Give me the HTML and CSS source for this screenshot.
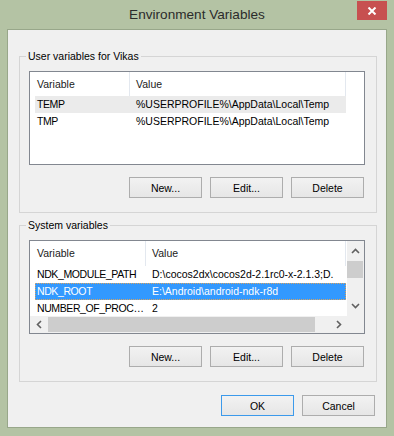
FILE: index.html
```html
<!DOCTYPE html>
<html lang="en">
<head>
    <meta charset="UTF-8">
    <meta name="viewport" content="width=device-width, initial-scale=1.0">
    <title>Environment Variables</title>
    <link rel="stylesheet" href="styles.css">
</head>
<body>

    <div class="window">
        <!-- Title bar -->
        <div class="titlebar">
            <span class="title">Environment Variables</span>
            <span class="close">
                <svg width="10" height="8" viewBox="0 0 10 8">
                    <path d="M1.5 0.5 L8.5 7.5 M8.5 0.5 L1.5 7.5" stroke="#fff" stroke-width="2" fill="none"/>
                </svg>
            </span>
        </div>

        <div class="client">
            <!-- User variables -->
            <fieldset class="group">
                <legend>User variables for Vikas</legend>
                <div class="list user-list">
                    <div class="list-view">
                        <div class="list-head">
                            <span class="col col-name">Variable</span>
                            <span class="col col-value">Value</span>
                            <span class="col col-fill"></span>
                        </div>
                        <div class="list-row inactive">
                            <span class="cell cell-name">TEMP</span>
                            <span class="cell cell-value">%USERPROFILE%\AppData\Local\Temp</span>
                        </div>
                        <div class="list-row">
                            <span class="cell cell-name">TMP</span>
                            <span class="cell cell-value">%USERPROFILE%\AppData\Local\Temp</span>
                        </div>
                    </div>
                </div>
                <div class="buttons">
                    <button class="btn">New...</button>
                    <button class="btn">Edit...</button>
                    <button class="btn">Delete</button>
                </div>
            </fieldset>

            <!-- System variables -->
            <fieldset class="group group-system">
                <legend>System variables</legend>
                <div class="list system-list">
                    <div class="list-view">
                        <div class="list-head">
                            <span class="col col-name">Variable</span>
                            <span class="col col-value">Value</span>
                        </div>
                        <div class="list-row">
                            <span class="cell cell-name">NDK_MODULE_PATH</span>
                            <span class="cell cell-value">D:\cocos2dx\cocos2d-2.1rc0-x-2.1.3;D.</span>
                        </div>
                        <div class="list-row selected">
                            <span class="cell cell-name">NDK_ROOT</span>
                            <span class="cell cell-value">E:\Android\android-ndk-r8d</span>
                        </div>
                        <div class="list-row">
                            <span class="cell cell-name">NUMBER_OF_PROC…</span>
                            <span class="cell cell-value">2</span>
                        </div>
                    </div>

                    <div class="vscroll">
                        <span class="arrow">
                            <svg width="9" height="6" viewBox="0 0 9 6"><path d="M1 5 L4.5 1.5 L8 5" stroke="#606060" stroke-width="1.6" fill="none"/></svg>
                        </span>
                        <span class="thumb"></span>
                        <span class="track"></span>
                        <span class="arrow">
                            <svg width="9" height="6" viewBox="0 0 9 6"><path d="M1 1 L4.5 4.5 L8 1" stroke="#606060" stroke-width="1.6" fill="none"/></svg>
                        </span>
                    </div>

                    <div class="hscroll">
                        <span class="arrow">
                            <svg width="6" height="9" viewBox="0 0 6 9"><path d="M5 1 L1.5 4.5 L5 8" stroke="#606060" stroke-width="1.6" fill="none"/></svg>
                        </span>
                        <span class="thumb"></span>
                        <span class="track"></span>
                        <span class="arrow">
                            <svg width="6" height="9" viewBox="0 0 6 9"><path d="M1 1 L4.5 4.5 L1 8" stroke="#606060" stroke-width="1.6" fill="none"/></svg>
                        </span>
                    </div>

                    <div class="corner"></div>
                </div>
                <div class="buttons">
                    <button class="btn">New...</button>
                    <button class="btn">Edit...</button>
                    <button class="btn">Delete</button>
                </div>
            </fieldset>

            <div class="dialog-buttons">
                <button class="btn btn-default">OK</button>
                <button class="btn">Cancel</button>
            </div>
        </div>
    </div>

</body>
</html>
```

FILE: styles.css
```css
/* General Reset */
* {
    margin: 0;
    padding: 0;
    box-sizing: border-box;
    font-family: 'Liberation Sans', Arial, sans-serif;
}

body {
    background: #b4c3a4;
    color: #000;
    font-size: 10.5px;
}

/* Window frame */
.window {
    width: 394px;
    height: 436px;
    background: #b4c3a4;
    display: flex;
    flex-direction: column;
}

.titlebar {
    height: 29px;
    display: grid;
    grid-template-columns: 1fr auto 1fr;
}

.title {
    grid-column: 2;
    align-self: center;
    font-size: 13.6px;
    color: #2b2b2b;
    line-height: 20px;
    padding-top: 1px;
}

.close {
    grid-column: 3;
    justify-self: end;
    align-self: start;
    width: 30px;
    height: 19px;
    margin-top: 1px;
    margin-right: 7px;
    background: #c75050;
    display: flex;
    justify-content: center;
    align-items: center;
}

.client {
    flex: 1;
    margin: 0 7px 8px 7px;
    border: 1px solid #98a78a;
    background: #f0f0f0;
    padding: 19px 0 11px 0;
    display: flex;
    flex-direction: column;
}

/* Group boxes */
.group {
    border: 1px solid #d5d5d5;
    margin: 0 9px 0 11px;
    padding: 7px 11px 14px 9px;
    min-width: 0;
}

.group-system {
    margin-top: 5px;
}

.group legend {
    line-height: 15px;
    padding: 0 2px;
    margin-left: -3px;
    color: #000;
}

/* List views */
.list {
    height: 94px;
    background: #fff;
    border: 1px solid #828790;
    overflow: hidden;
}

.user-list {
    --name-w: 100px;
    --value-w: 216px;
}

.system-list {
    --name-w: 116px;
    --value-w: 200px;
    display: grid;
    grid-template-columns: 1fr 17px;
    grid-template-rows: 1fr 17px;
}

.list-view {
    overflow: hidden;
    min-width: 0;
}

.list-head {
    height: 24px;
    display: flex;
}

.system-list .list-head {
    height: 25px;
}

.col {
    line-height: 24px;
    white-space: nowrap;
    border-right: 1px solid #e3e8ef;
    color: #1a1a1a;
}

.col-name {
    width: var(--name-w);
    padding-left: 7px;
}

.col-value {
    width: var(--value-w);
    padding-left: 6px;
}

.col-fill {
    flex: 1;
    border-right: none;
}

.list-row {
    height: 17px;
    margin-left: 5px;
    width: calc(var(--name-w) + var(--value-w) - 5px);
    display: grid;
    grid-template-columns: calc(var(--name-w) - 5px) var(--value-w);
    line-height: 17px;
}

.list-row.inactive {
    background: #ebebeb;
}

.list-row.selected {
    background: #3399ff;
    color: #fff;
    outline: 1px dotted #d9a360;
    outline-offset: -1px;
}

.cell {
    white-space: nowrap;
    overflow: hidden;
}

.cell-name {
    padding-left: 2px;
    letter-spacing: -0.4px;
}

.cell-value {
    padding-left: 6px;
}

/* Scrollbars */
.vscroll,
.hscroll,
.corner {
    background: #f0f0f0;
}

.vscroll {
    display: flex;
    flex-direction: column;
}

.vscroll .arrow {
    height: 20px;
}

.vscroll .thumb {
    height: 17px;
    margin: 0 1px 0 0;
    background: #cdcdcd;
}

.hscroll {
    display: flex;
}

.hscroll .arrow {
    width: 17px;
}

.hscroll .thumb {
    width: 267px;
    margin: 1px 0 1px 1px;
    background: #cdcdcd;
}

.track {
    flex: 1;
}

.arrow {
    display: flex;
    justify-content: center;
    align-items: center;
}

/* Buttons */
.buttons,
.dialog-buttons {
    display: flex;
    justify-content: flex-end;
    gap: 8px;
}

.buttons {
    margin-top: 12px;
    padding-right: 1px;
}

.dialog-buttons {
    margin-top: 13px;
    padding-right: 11px;
}

.btn {
    width: 73px;
    height: 21px;
    border: 1px solid #adadad;
    background: linear-gradient(#f2f2f2, #e6e6e6);
    font-size: 10.5px;
    color: #000;
}

.btn-default {
    border-color: #3c9aeb;
}
```
